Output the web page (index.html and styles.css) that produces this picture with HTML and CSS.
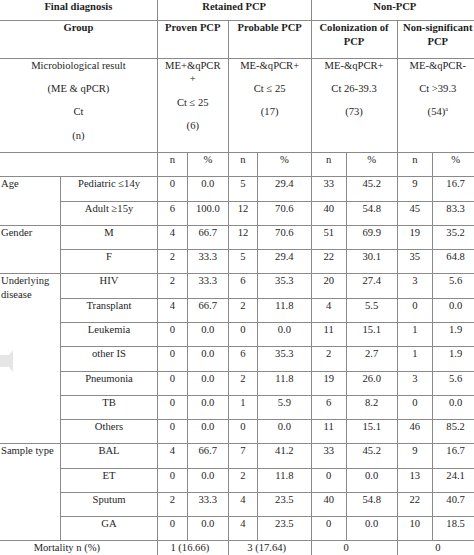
FILE: index.html
```html
<!DOCTYPE html>
<html lang="en">
<head>
<meta charset="utf-8">
<title>PCP table</title>
<link rel="stylesheet" href="styles.css">
</head>
<body>
<table class="tbl">
  <colgroup>
    <col class="c-cat"><col class="c-sub">
    <col class="c-n1"><col class="c-p1">
    <col class="c-n2"><col class="c-p2">
    <col class="c-n3"><col class="c-p3">
    <col class="c-n4"><col class="c-p4">
  </colgroup>
  <tbody>
    <tr class="hd top">
      <td colspan="2"><p>Final diagnosis</p></td>
      <td colspan="4"><p>Retained PCP</p></td>
      <td colspan="4"><p>Non-PCP</p></td>
    </tr>
    <tr class="hd">
      <td colspan="2"><p>Group</p></td>
      <td colspan="2"><p>Proven PCP</p></td>
      <td colspan="2"><p>Probable PCP</p></td>
      <td colspan="2"><p>Colonization of PCP</p></td>
      <td colspan="2"><p>Non-significant PCP</p></td>
    </tr>
    <tr class="ctr">
      <td colspan="2"><p>Microbiological result</p><p>(ME &amp; qPCR)</p><p>Ct</p><p>(n)</p></td>
      <td colspan="2"><p>ME+&amp;qPCR<br>+</p><p>Ct ≤ 25</p><p>(6)</p></td>
      <td colspan="2"><p>ME-&amp;qPCR+</p><p>Ct ≤ 25</p><p>(17)</p></td>
      <td colspan="2"><p>ME-&amp;qPCR+</p><p>Ct 26-39.3</p><p>(73)</p></td>
      <td colspan="2"><p>ME-&amp;qPCR-</p><p>Ct &gt;39.3</p><p>(54)<sup>a</sup></p></td>
    </tr>
    <tr class="ctr">
      <td colspan="2"><p>&nbsp;</p></td>
      <td><p>n</p></td><td><p>%</p></td>
      <td><p>n</p></td><td><p>%</p></td>
      <td><p>n</p></td><td><p>%</p></td>
      <td><p>n</p></td><td><p>%</p></td>
    </tr>
    <tr class="ctr">
      <td class="lab" rowspan="2"><p>Age</p></td>
      <td><p>Pediatric ≤14y</p></td>
      <td><p>0</p></td><td><p>0.0</p></td><td><p>5</p></td><td><p>29.4</p></td><td><p>33</p></td><td><p>45.2</p></td><td><p>9</p></td><td><p>16.7</p></td>
    </tr>
    <tr class="ctr">
      <td><p>Adult ≥15y</p></td>
      <td><p>6</p></td><td><p>100.0</p></td><td><p>12</p></td><td><p>70.6</p></td><td><p>40</p></td><td><p>54.8</p></td><td><p>45</p></td><td><p>83.3</p></td>
    </tr>
    <tr class="ctr">
      <td class="lab" rowspan="2"><p>Gender</p></td>
      <td><p>M</p></td>
      <td><p>4</p></td><td><p>66.7</p></td><td><p>12</p></td><td><p>70.6</p></td><td><p>51</p></td><td><p>69.9</p></td><td><p>19</p></td><td><p>35.2</p></td>
    </tr>
    <tr class="ctr">
      <td><p>F</p></td>
      <td><p>2</p></td><td><p>33.3</p></td><td><p>5</p></td><td><p>29.4</p></td><td><p>22</p></td><td><p>30.1</p></td><td><p>35</p></td><td><p>64.8</p></td>
    </tr>
    <tr class="ctr">
      <td class="lab ud" rowspan="7"><p>Underlying disease</p>
        <svg class="ghost" width="14" height="22" viewBox="0 0 14 22"><path d="M0 5 H9 L13 0 V22 L9 17 H0 Z" fill="#e6e6e6"/></svg>
      </td>
      <td><p>HIV</p></td>
      <td><p>2</p></td><td><p>33.3</p></td><td><p>6</p></td><td><p>35.3</p></td><td><p>20</p></td><td><p>27.4</p></td><td><p>3</p></td><td><p>5.6</p></td>
    </tr>
    <tr class="ctr">
      <td><p>Transplant</p></td>
      <td><p>4</p></td><td><p>66.7</p></td><td><p>2</p></td><td><p>11.8</p></td><td><p>4</p></td><td><p>5.5</p></td><td><p>0</p></td><td><p>0.0</p></td>
    </tr>
    <tr class="ctr">
      <td><p>Leukemia</p></td>
      <td><p>0</p></td><td><p>0.0</p></td><td><p>0</p></td><td><p>0.0</p></td><td><p>11</p></td><td><p>15.1</p></td><td><p>1</p></td><td><p>1.9</p></td>
    </tr>
    <tr class="ctr">
      <td><p>other IS</p></td>
      <td><p>0</p></td><td><p>0.0</p></td><td><p>6</p></td><td><p>35.3</p></td><td><p>2</p></td><td><p>2.7</p></td><td><p>1</p></td><td><p>1.9</p></td>
    </tr>
    <tr class="ctr">
      <td><p>Pneumonia</p></td>
      <td><p>0</p></td><td><p>0.0</p></td><td><p>2</p></td><td><p>11.8</p></td><td><p>19</p></td><td><p>26.0</p></td><td><p>3</p></td><td><p>5.6</p></td>
    </tr>
    <tr class="ctr">
      <td><p>TB</p></td>
      <td><p>0</p></td><td><p>0.0</p></td><td><p>1</p></td><td><p>5.9</p></td><td><p>6</p></td><td><p>8.2</p></td><td><p>0</p></td><td><p>0.0</p></td>
    </tr>
    <tr class="ctr">
      <td><p>Others</p></td>
      <td><p>0</p></td><td><p>0.0</p></td><td><p>0</p></td><td><p>0.0</p></td><td><p>11</p></td><td><p>15.1</p></td><td><p>46</p></td><td><p>85.2</p></td>
    </tr>
    <tr class="ctr">
      <td class="lab" rowspan="4"><p>Sample type</p></td>
      <td><p>BAL</p></td>
      <td><p>4</p></td><td><p>66.7</p></td><td><p>7</p></td><td><p>41.2</p></td><td><p>33</p></td><td><p>45.2</p></td><td><p>9</p></td><td><p>16.7</p></td>
    </tr>
    <tr class="ctr">
      <td><p>ET</p></td>
      <td><p>0</p></td><td><p>0.0</p></td><td><p>2</p></td><td><p>11.8</p></td><td><p>0</p></td><td><p>0.0</p></td><td><p>13</p></td><td><p>24.1</p></td>
    </tr>
    <tr class="ctr">
      <td><p>Sputum</p></td>
      <td><p>2</p></td><td><p>33.3</p></td><td><p>4</p></td><td><p>23.5</p></td><td><p>40</p></td><td><p>54.8</p></td><td><p>22</p></td><td><p>40.7</p></td>
    </tr>
    <tr class="ctr">
      <td><p>GA</p></td>
      <td><p>0</p></td><td><p>0.0</p></td><td><p>4</p></td><td><p>23.5</p></td><td><p>0</p></td><td><p>0.0</p></td><td><p>10</p></td><td><p>18.5</p></td>
    </tr>
    <tr class="ctr">
      <td colspan="2" class="m-lab"><p>Mortality n (%)</p></td>
      <td colspan="2" class="m-val"><p>1 (16.66)</p></td>
      <td colspan="2" class="m-val"><p>3 (17.64)</p></td>
      <td colspan="2" class="m-zero"><p>0</p></td>
      <td colspan="2"><p>0</p></td>
    </tr>
  </tbody>
</table>
</body>
</html>
```

FILE: styles.css
```css
html, body {
  margin: 0;
  padding: 0;
  background: #ffffff;
  overflow: hidden;
}

.tbl {
  border-collapse: collapse;
  table-layout: fixed;
  width: 478px;
  margin-top: 0;
  border-top: hidden;
  border-left: hidden;
  border-right: hidden;
  font-family: "Liberation Serif", "Times New Roman", "Nimbus Roman", serif;
  font-size: 10.6px;
  line-height: 13.6px;
  color: #1e1e1e;
}

.c-cat { width: 60.7px; }
.c-sub { width: 96.6px; }
.c-n1 { width: 30px; }
.c-p1 { width: 41px; }
.c-n2 { width: 29.4px; }
.c-p2 { width: 53.3px; }
.c-n3 { width: 35.3px; }
.c-p3 { width: 50.7px; }
.c-n4 { width: 35.7px; }
.c-p4 { width: 45.3px; }

.tbl td {
  border: 1px solid #8a8a8a;
  padding: 0 1px;
  vertical-align: top;
  text-align: center;
}

.tbl p {
  margin: 0 0 9.7px 0;
}

.tbl .top p {
  margin-bottom: 6.4px;
}

.hd td {
  font-weight: bold;
}

.tbl td.lab {
  text-align: left;
  padding-left: 1px;
}

.ud {
  position: relative;
}

.ghost {
  position: absolute;
  left: 0;
  top: 76px;
}

.tbl sup {
  font-size: 6px;
  line-height: 0;
  vertical-align: 4px;
}

.tbl td.m-lab {
  padding-right: 24px;
}

.tbl td.m-val {
  padding-right: 7px;
}

.tbl td.m-zero {
  padding-right: 17px;
}
```
